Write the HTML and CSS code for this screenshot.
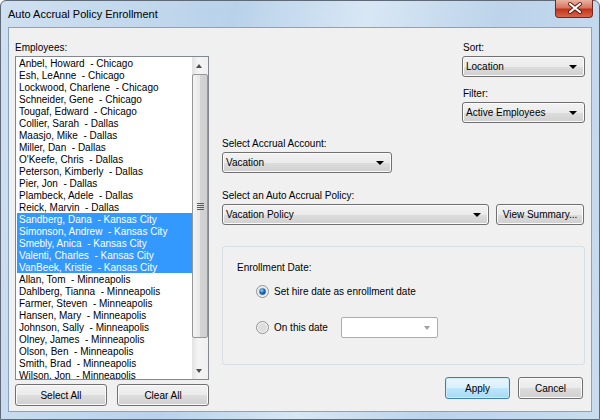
FILE: index.html
```html
<!doctype html>
<html lang="en">
    <head>
        <meta charset="UTF-8" />
        <title>Auto Accrual Policy Enrollment</title>
        <link rel="stylesheet" href="styles.css">
    </head>
    <body>
        <div class="window">
            <div class="titlebar">
                <span class="title">Auto Accrual Policy Enrollment</span>
                <div class="close">
                    <svg width="38" height="18" viewBox="0 0 38 18">
                        <path d="M14 5 L24 13 M24 5 L14 13" stroke="#5a1a10" stroke-width="4" stroke-linecap="round" />
                        <path d="M14 5 L24 13 M24 5 L14 13" stroke="#ffffff" stroke-width="2.2" stroke-linecap="round" />
                    </svg>
                </div>
            </div>

            <div class="client">
                <div class="left">
                    <p class="label">Employees:</p>
                    <div class="listbox">
                        <div class="rows">
                            <div class="item">Anbel, Howard  - Chicago</div>
                            <div class="item">Esh, LeAnne  - Chicago</div>
                            <div class="item">Lockwood, Charlene  - Chicago</div>
                            <div class="item">Schneider, Gene  - Chicago</div>
                            <div class="item">Tougaf, Edward  - Chicago</div>
                            <div class="item">Collier, Sarah  - Dallas</div>
                            <div class="item">Maasjo, Mike  - Dallas</div>
                            <div class="item">Miller, Dan  - Dallas</div>
                            <div class="item">O'Keefe, Chris  - Dallas</div>
                            <div class="item">Peterson, Kimberly  - Dallas</div>
                            <div class="item">Pier, Jon  - Dallas</div>
                            <div class="item">Plambeck, Adele  - Dallas</div>
                            <div class="item">Reick, Marvin  - Dallas</div>
                            <div class="item selected">Sandberg, Dana  - Kansas City</div>
                            <div class="item selected">Simonson, Andrew  - Kansas City</div>
                            <div class="item selected">Smebly, Anica  - Kansas City</div>
                            <div class="item selected">Valenti, Charles  - Kansas City</div>
                            <div class="item selected">VanBeek, Kristie  - Kansas City</div>
                            <div class="item">Allan, Tom  - Minneapolis</div>
                            <div class="item">Dahlberg, Tianna  - Minneapolis</div>
                            <div class="item">Farmer, Steven  - Minneapolis</div>
                            <div class="item">Hansen, Mary  - Minneapolis</div>
                            <div class="item">Johnson, Sally  - Minneapolis</div>
                            <div class="item">Olney, James  - Minneapolis</div>
                            <div class="item">Olson, Ben  - Minneapolis</div>
                            <div class="item">Smith, Brad  - Minneapolis</div>
                            <div class="item">Wilson, Jon  - Minneapolis</div>
                        </div>
                        <div class="scrollbar">
                            <div class="arrow up"></div>
                            <div class="track">
                                <div class="thumb"><span class="grip"></span></div>
                            </div>
                            <div class="arrow down"></div>
                        </div>
                    </div>
                    <div class="left-buttons">
                        <button class="btn wide">Select All</button>
                        <button class="btn wide">Clear All</button>
                    </div>
                </div>

                <div class="right">
                    <div class="sortfilter">
                        <p class="label">Sort:</p>
                        <div class="combo sf">Location</div>
                        <p class="label filter-label">Filter:</p>
                        <div class="combo sf">Active Employees</div>
                    </div>

                    <p class="label account-label">Select Accrual Account:</p>
                    <div class="combo account">Vacation</div>

                    <p class="label policy-label">Select an Auto Accrual Policy:</p>
                    <div class="policy-row">
                        <div class="combo policy">Vacation Policy</div>
                        <button class="btn summary">View Summary...</button>
                    </div>

                    <div class="groupbox">
                        <p class="label">Enrollment Date:</p>
                        <div class="radio-row first">
                            <svg class="radio" width="13" height="13" viewBox="0 0 13 13">
                                <defs>
                                    <radialGradient id="dot" cx="0.4" cy="0.35" r="0.7">
                                        <stop offset="0" stop-color="#9fd8ff" />
                                        <stop offset="0.5" stop-color="#1c74c8" />
                                        <stop offset="1" stop-color="#0b3f7c" />
                                    </radialGradient>
                                </defs>
                                <circle cx="6.5" cy="6.5" r="6" fill="#f4f4f4" stroke="#8e8f8f" />
                                <circle cx="6.5" cy="6.5" r="4.5" fill="#e2e2e2" />
                                <circle cx="6.5" cy="6.5" r="3.2" fill="url(#dot)" />
                            </svg>
                            <span>Set hire date as enrollment date</span>
                        </div>
                        <div class="radio-row second">
                            <svg class="radio" width="13" height="13" viewBox="0 0 13 13">
                                <circle cx="6.5" cy="6.5" r="6" fill="#f4f4f4" stroke="#8e8f8f" />
                                <circle cx="6.5" cy="6.5" r="4.5" fill="#dedede" />
                            </svg>
                            <span class="on-date">On this date</span>
                            <div class="combo date"></div>
                        </div>
                    </div>

                    <div class="bottom-buttons">
                        <button class="btn default">Apply</button>
                        <button class="btn">Cancel</button>
                    </div>
                </div>
            </div>
        </div>
    </body>
</html>
```

FILE: styles.css
```css
* {
    margin: 0;
    padding: 0;
    box-sizing: border-box;
}
body {
    width: 600px;
    height: 420px;
    overflow: hidden;
    background: #ffffff;
    font-family: "Liberation Sans", Arial, sans-serif;
    font-size: 10px;
    color: #000000;
}

.window {
    position: relative;
    width: 600px;
    height: 420px;
    border: 1px solid #5e6a78;
    border-radius: 6px 6px 0 0;
    background: linear-gradient(
            100deg,
            #cfe0f0 0%,
            #b9d2ea 35%,
            #d8e7f4 55%,
            #bcd3ea 75%,
            #c9dcef 100%
        );
}

.titlebar {
    height: 26px;
    display: flex;
    align-items: center;
    padding-left: 7px;
}
.title {
    font-size: 11px;
    color: #000000;
    padding-bottom: 1px;
}
.close {
    position: absolute;
    top: -1px;
    right: 6px;
    width: 38px;
    height: 18px;
    border: 1px solid #6b2b20;
    border-top: none;
    border-radius: 0 0 4px 4px;
    background: linear-gradient(
        #eab2a3 0%,
        #d8765f 45%,
        #c0341b 55%,
        #d7654a 100%
    );
}
.close svg {
    display: block;
    margin-top: -1px;
}

.client {
    width: 584px;
    height: 385px;
    margin-left: 7px;
    border: 1px solid #8aa2bd;
    background: #f0f0f0;
    display: flex;
    padding: 14px 0 0 6px;
}

.label {
    line-height: 12px;
    height: 12px;
}

/* employees list */
.left {
    width: 194px;
}
.listbox {
    margin-top: 2px;
    height: 324px;
    border: 1px solid #828790;
    background: #ffffff;
    display: flex;
}
.rows {
    flex: 1;
    overflow: hidden;
    padding-left: 1px;
}
.item {
    height: 12px;
    line-height: 13px;
    padding-left: 2px;
    white-space: pre;
}
.item.selected {
    background: #3399ff;
    color: #ffffff;
}

.scrollbar {
    width: 16px;
    display: flex;
    flex-direction: column;
    background: linear-gradient(90deg, #e3e3e3, #f4f4f4 40%, #f0f0f0);
}
.arrow {
    height: 17px;
    position: relative;
}
.arrow::after {
    content: "";
    position: absolute;
    left: 4px;
    border-left: 3.5px solid transparent;
    border-right: 3.5px solid transparent;
}
.arrow.up::after {
    top: 7px;
    border-bottom: 4px solid #4d4d4d;
}
.arrow.down::after {
    top: 7px;
    border-top: 4px solid #4d4d4d;
}
.track {
    flex: 1;
    padding: 0 0 1px 0;
}
.thumb {
    height: 264px;
    border: 1px solid #979797;
    border-radius: 2px;
    background: linear-gradient(90deg, #f4f4f4, #e8e8e8 50%, #d4d4d4 51%, #cfcfcf);
    display: flex;
    align-items: center;
    justify-content: center;
}
.grip {
    width: 7px;
    height: 7px;
    background: repeating-linear-gradient(
        #5a5a5a 0px,
        #5a5a5a 1px,
        transparent 1px,
        transparent 2px
    );
}

.left-buttons {
    display: flex;
    justify-content: space-between;
    margin-top: 4px;
}

/* buttons */
.btn {
    font-family: "Liberation Sans", Arial, sans-serif;
    font-size: 10px;
    color: #000000;
    height: 22px;
    border: 1px solid #707070;
    border-radius: 3px;
    background: linear-gradient(
        #f2f2f2 0%,
        #ebebeb 50%,
        #dddddd 51%,
        #cfcfcf 100%
    );
    box-shadow: inset 0 0 0 1px #fbfbfb;
}
.btn.wide {
    width: 92px;
}
.btn.default {
    border-color: #3c7fb1;
    background: linear-gradient(
        #eaf6fd 0%,
        #d9f0fc 50%,
        #bee6fd 51%,
        #a7d9f5 100%
    );
    box-shadow: inset 0 0 0 1px #d0ecfb;
}

/* right side */
.right {
    width: 363px;
    margin-left: 13px;
    display: flex;
    flex-direction: column;
}
.sortfilter {
    align-self: flex-end;
    width: 123px;
}
.sortfilter .label {
    padding-left: 1px;
}
.filter-label {
    margin-top: 11px;
}

.combo {
    position: relative;
    height: 21px;
    line-height: 19px;
    padding-left: 3px;
    border: 1px solid #707070;
    border-radius: 3px;
    background: linear-gradient(
        #f2f2f2 0%,
        #ebebeb 50%,
        #dddddd 51%,
        #cfcfcf 100%
    );
    box-shadow: inset 0 0 0 1px #fbfbfb;
    margin-top: 2px;
}
.combo::after {
    content: "";
    position: absolute;
    right: 7px;
    top: 8px;
    border-left: 4px solid transparent;
    border-right: 4px solid transparent;
    border-top: 4px solid #000000;
}
.combo.sf {
    width: 123px;
}

.account-label {
    margin-top: 15px;
}
.combo.account {
    width: 170px;
}
.policy-label {
    margin-top: 17px;
}
.policy-row {
    display: flex;
    align-items: flex-start;
}
.combo.policy {
    width: 267px;
}
.btn.summary {
    width: 88px;
    height: 21px;
    margin: 2px 0 0 7px;
}

.groupbox {
    margin-top: 21px;
    height: 119px;
    border: 1px solid #d5dfe5;
    border-radius: 3px;
    padding: 15px 0 0 14px;
}
.radio-row {
    display: flex;
    align-items: center;
    height: 21px;
    padding-left: 19px;
}
.radio-row.first {
    margin-top: 7px;
}
.radio-row.second {
    margin-top: 15px;
}
.radio {
    display: block;
    margin-right: 5px;
}
.on-date {
    width: 67px;
}
.combo.date {
    width: 97px;
    margin: 0;
    border-color: #abadb3;
    background: #ffffff;
    box-shadow: none;
    border-radius: 2px;
}
.combo.date::after {
    border-top-color: #a0a0a0;
    border-left-width: 3.5px;
    border-right-width: 3.5px;
}

.bottom-buttons {
    display: flex;
    justify-content: flex-end;
    gap: 8px;
    margin-top: 12px;
    padding-right: 2px;
}
.bottom-buttons .btn {
    width: 65px;
}
```
